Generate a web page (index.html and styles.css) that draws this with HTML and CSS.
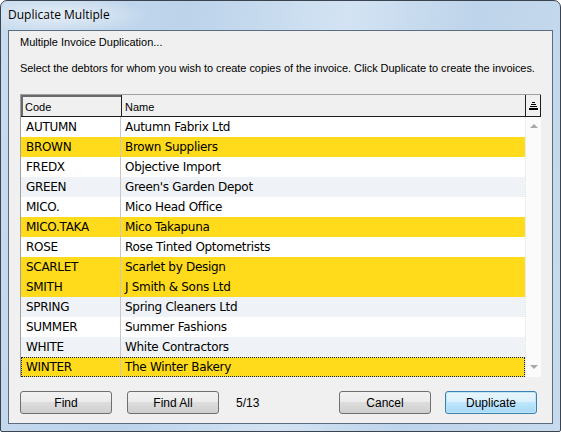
FILE: index.html
```html
<!DOCTYPE html>
<html lang="en">
<head>
  <meta charset="UTF-8">
  <title>Duplicate Multiple</title>
  <link rel="stylesheet" href="styles.css">
</head>
<body>
  <div class="window">
    <div class="titlebar">Duplicate Multiple</div>

    <div class="client">
      <div class="heading">Multiple Invoice Duplication...</div>
      <div class="hint">Select the debtors for whom you wish to create copies of the invoice. Click Duplicate to create the invoices.</div>

      <div class="grid">
        <div class="grid-head">
          <div class="hcell code sorted">Code</div>
          <div class="hcell name">Name</div>
          <div class="hcell picker">
            <svg width="9" height="8" viewBox="0 0 9 8">
              <rect x="3" y="0" width="3" height="1" fill="#000"/>
              <rect x="2" y="2" width="5" height="1" fill="#000"/>
              <rect x="1" y="4" width="7" height="1" fill="#000"/>
              <rect x="0" y="6" width="9" height="2" fill="#000"/>
            </svg>
          </div>
        </div>

        <div class="grid-body">
          <div class="rows">
            <div class="row"><span class="code">AUTUMN</span><span class="name">Autumn Fabrix Ltd</span></div>
            <div class="row sel"><span class="code">BROWN</span><span class="name">Brown Suppliers</span></div>
            <div class="row"><span class="code">FREDX</span><span class="name">Objective Import</span></div>
            <div class="row alt"><span class="code">GREEN</span><span class="name">Green's Garden Depot</span></div>
            <div class="row"><span class="code">MICO.</span><span class="name">Mico Head Office</span></div>
            <div class="row sel"><span class="code">MICO.TAKA</span><span class="name">Mico Takapuna</span></div>
            <div class="row"><span class="code">ROSE</span><span class="name">Rose Tinted Optometrists</span></div>
            <div class="row sel"><span class="code">SCARLET</span><span class="name">Scarlet by Design</span></div>
            <div class="row sel"><span class="code">SMITH</span><span class="name">J Smith &amp; Sons Ltd</span></div>
            <div class="row alt"><span class="code">SPRING</span><span class="name">Spring Cleaners Ltd</span></div>
            <div class="row"><span class="code">SUMMER</span><span class="name">Summer Fashions</span></div>
            <div class="row alt"><span class="code">WHITE</span><span class="name">White Contractors</span></div>
            <div class="row sel focus"><span class="code">WINTER</span><span class="name">The Winter Bakery</span></div>
          </div>
          <div class="scroll">
            <span class="arrow up"></span>
            <span class="arrow down"></span>
          </div>
        </div>
      </div>

      <div class="buttons">
        <button class="btn">Find</button>
        <button class="btn">Find All</button>
        <span class="count">5/13</span>
        <span class="spacer"></span>
        <button class="btn">Cancel</button>
        <button class="btn default">Duplicate</button>
      </div>
    </div>
  </div>
</body>
</html>
```

FILE: styles.css
```css
body {
  margin: 0;
  width: 561px;
  height: 432px;
  overflow: hidden;
  background: #fff;
  font-family: "Liberation Sans", Arial, sans-serif;
}

.window {
  box-sizing: border-box;
  width: 561px;
  height: 432px;
  border: 1px solid #3a4450;
  border-radius: 7px 7px 2px 2px;
  background: linear-gradient(100deg, #c9dcef 0%, #bcd3ea 30%, #d3e3f3 55%, #bed4ea 75%, #c8dbee 100%);
  display: flex;
  flex-direction: column;
}

.titlebar {
  height: 29px;
  line-height: 28px;
  padding-left: 7px;
  font-family: "Open Sans", sans-serif;
  font-size: 12px;
  color: #000;
  background: radial-gradient(ellipse 90px 18px at 60px 14px, rgba(255,255,255,0.55), rgba(255,255,255,0));
}

.client {
  flex: 1;
  margin: 0 7px 7px 7px;
  border: 1px solid #5d6d80;
  background: #f0f0f0;
  padding: 4px 11px 0 11px;
  display: flex;
  flex-direction: column;
}

.heading {
  font-size: 11px;
  line-height: 14px;
  color: #000;
}

.hint {
  margin-top: 12px;
  font-size: 11px;
  line-height: 14px;
  letter-spacing: -0.05px;
  white-space: nowrap;
  color: #000;
}

.grid {
  margin-top: 19px;
  border-top: 1px solid #a0a0a0;
  border-left: 1px solid #a0a0a0;
  background: #fff;
  font-family: "DejaVu Sans", sans-serif;
  font-size: 12px;
  letter-spacing: -0.3px;
}

.grid-head {
  display: flex;
  height: 21px;
  background: #f0f0f0;
  border-bottom: 1px solid #1e1e1e;
}

.hcell {
  box-sizing: border-box;
  padding-top: 3px;
  line-height: 18px;
  padding-left: 4px;
  font-family: "Liberation Sans", Arial, sans-serif;
  font-size: 11px;
  letter-spacing: 0;
}

.hcell.code {
  width: 100px;
  border-top: 2px solid #696969;
  border-left: 2px solid #696969;
  padding-top: 1px;
  padding-left: 2px;
}

.hcell.name {
  flex: 1;
  border-left: 1px solid #1e1e1e;
  padding-left: 3px;
}

.hcell.picker {
  width: 16px;
  border-left: 1px solid #1e1e1e;
  border-right: 1px solid #1e1e1e;
  padding: 0;
  display: flex;
  align-items: center;
  justify-content: center;
}

.grid-body {
  display: flex;
}

.rows {
  flex: 1;
}

.row {
  display: flex;
  height: 20px;
  line-height: 20px;
  background: #fff;
}

.row.alt {
  background: #eff3f7;
}

.row.sel {
  background: #ffdb1b;
}

.row.focus {
  outline: 1px dotted #0a246a;
  outline-offset: -1px;
}

.row .code {
  box-sizing: border-box;
  width: 100px;
  padding-left: 5px;
  border-right: 1px solid #c8c8c8;
}

.row .name {
  padding-left: 4px;
}

.scroll {
  box-sizing: border-box;
  width: 16px;
  border-left: 1px dotted #e0e0e0;
  background: #fbfbfb;
  display: flex;
  flex-direction: column;
  justify-content: space-between;
  align-items: center;
  padding: 7px 0 8px 0;
}

.arrow {
  width: 0;
  height: 0;
  border-left: 4px solid transparent;
  border-right: 4px solid transparent;
}

.arrow.up {
  border-bottom: 4px solid #a8a8a8;
}

.arrow.down {
  border-top: 4px solid #a8a8a8;
}

.buttons {
  display: flex;
  align-items: center;
  margin-top: 14px;
  padding-right: 4px;
  gap: 15px;
}

.btn {
  box-sizing: border-box;
  width: 92px;
  height: 23px;
  border: 1px solid #707070;
  border-radius: 3px;
  background: linear-gradient(#f2f2f2 0%, #ebebeb 49%, #dddddd 50%, #cfcfcf 100%);
  font-family: "Liberation Sans", Arial, sans-serif;
  font-size: 12px;
  color: #000;
  padding: 0;
}

.btn.default {
  margin-left: -1px;
  border-color: #3c7fb1;
  box-shadow: inset 0 0 0 1px #bfe6f7;
  background: linear-gradient(#eaf6fd 0%, #d9f0fc 49%, #bee6fd 50%, #a7d9f5 100%);
}

.count {
  font-size: 12px;
  margin-left: 2px;
}

.spacer {
  flex: 1;
}
```
